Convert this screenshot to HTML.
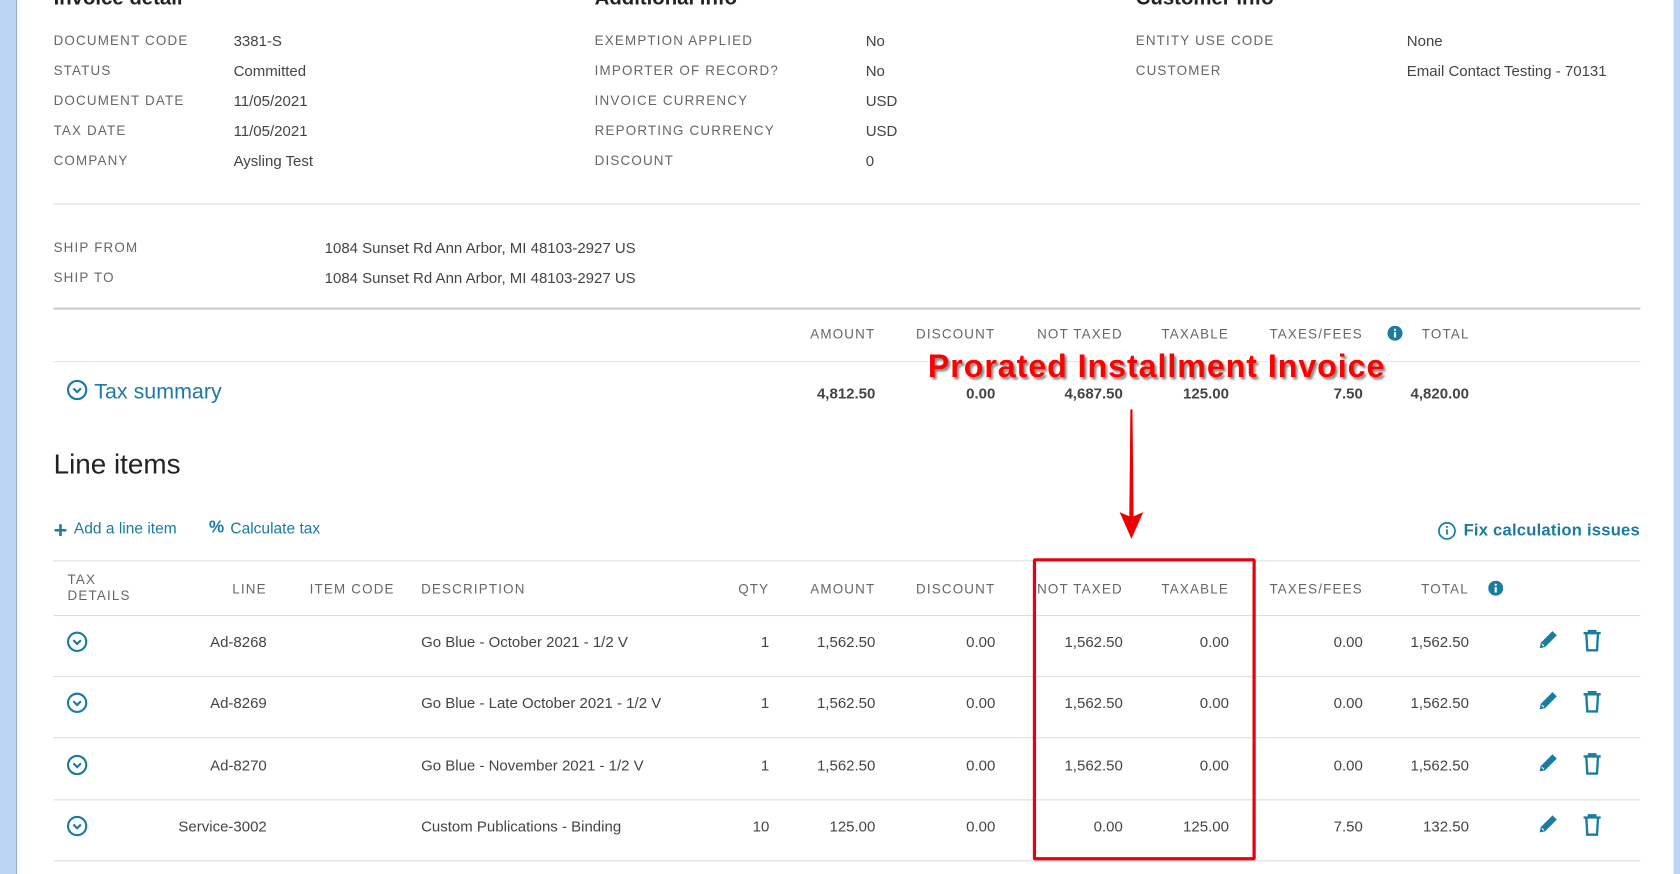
<!DOCTYPE html>
<html><head><meta charset="utf-8"><style>
html,body{margin:0;padding:0;background:#fff;width:1680px;height:874px;overflow:hidden}
#w{position:absolute;left:0;top:0;width:1568px;height:816px;transform:scale(1.07143);transform-origin:0 0;font-family:"Liberation Sans",sans-serif}
#w div{position:absolute;white-space:nowrap}
.lb{font-size:12.5px;letter-spacing:1.1px;color:#666;line-height:16px}
.v{font-size:14px;color:#444;line-height:18px}
.h{font-size:19px;font-weight:bold;color:#222}
.hr{height:1px;background:#ddd;left:50px;width:1481px}
.r{text-align:right;width:140px}
.b{font-weight:bold;color:#444;font-size:14px}
.blue{color:#1a7ba3}
</style></head><body><div id="w">
<div style="left:0;top:0;width:15px;height:816px;background:#bcd5f2"></div>
<div style="left:15px;top:0;width:1px;height:816px;background:#9ab"></div>
<div style="left:1562px;top:0;width:6px;height:816px;background:#bcd5f2"></div>

<div class="h" style="left:50px;top:-12px">Invoice detail</div>
<div class="h" style="left:555px;top:-12px">Additional info</div>
<div class="h" style="left:1060px;top:-12px">Customer info</div>

<div class="lb" style="left:50px;top:30px">DOCUMENT CODE</div><div class="v" style="left:218px;top:29px">3381-S</div>
<div class="lb" style="left:50px;top:58px">STATUS</div><div class="v" style="left:218px;top:57px">Committed</div>
<div class="lb" style="left:50px;top:86px">DOCUMENT DATE</div><div class="v" style="left:218px;top:85px">11/05/2021</div>
<div class="lb" style="left:50px;top:114px">TAX DATE</div><div class="v" style="left:218px;top:113px">11/05/2021</div>
<div class="lb" style="left:50px;top:142px">COMPANY</div><div class="v" style="left:218px;top:141px">Aysling Test</div>

<div class="lb" style="left:555px;top:30px">EXEMPTION APPLIED</div><div class="v" style="left:808px;top:29px">No</div>
<div class="lb" style="left:555px;top:58px">IMPORTER OF RECORD?</div><div class="v" style="left:808px;top:57px">No</div>
<div class="lb" style="left:555px;top:86px">INVOICE CURRENCY</div><div class="v" style="left:808px;top:85px">USD</div>
<div class="lb" style="left:555px;top:114px">REPORTING CURRENCY</div><div class="v" style="left:808px;top:113px">USD</div>
<div class="lb" style="left:555px;top:142px">DISCOUNT</div><div class="v" style="left:808px;top:141px">0</div>

<div class="lb" style="left:1060px;top:30px">ENTITY USE CODE</div><div class="v" style="left:1313px;top:29px">None</div>
<div class="lb" style="left:1060px;top:58px">CUSTOMER</div><div class="v" style="left:1313px;top:57px">Email Contact Testing - 70131</div>

<div class="hr" style="top:190px"></div>
<div class="lb" style="left:50px;top:223px">SHIP FROM</div><div class="v" style="left:303px;top:222px">1084 Sunset Rd Ann Arbor, MI 48103-2927 US</div>
<div class="lb" style="left:50px;top:251px">SHIP TO</div><div class="v" style="left:303px;top:250px">1084 Sunset Rd Ann Arbor, MI 48103-2927 US</div>
<div class="hr" style="top:287px;height:2px;background:#ccc"></div>

<div class="lb r" style="left:677px;top:304px">AMOUNT</div>
<div class="lb r" style="left:789px;top:304px">DISCOUNT</div>
<div class="lb r" style="left:908px;top:304px">NOT TAXED</div>
<div class="lb r" style="left:1007px;top:304px">TAXABLE</div>
<div class="lb r" style="left:1132px;top:304px">TAXES/FEES</div>
<svg style="position:absolute;left:1295px;top:304px" width="14" height="14" viewBox="0 0 14 14"><circle cx="7" cy="7" r="7" fill="#1a7ba3"/><rect x="6" y="6" width="2" height="5" fill="#fff"/><circle cx="7" cy="3.8" r="1.1" fill="#fff"/></svg>
<div class="lb" style="left:1327px;top:304px">TOTAL</div>
<div class="hr" style="top:337px;background:#e6e6e6"></div>

<svg style="position:absolute;left:62px;top:354px" width="20" height="20" viewBox="0 0 20 20"><circle cx="10" cy="10" r="8.5" fill="none" stroke="#1a7ba3" stroke-width="2"/><path d="M6.5 8.5 L10 12 L13.5 8.5" fill="none" stroke="#1a7ba3" stroke-width="2"/></svg>
<div class="blue" style="left:88px;top:355px;font-size:20px">Tax summary</div>
<div class="b r" style="left:677px;top:359px">4,812.50</div>
<div class="b r" style="left:789px;top:359px">0.00</div>
<div class="b r" style="left:908px;top:359px">4,687.50</div>
<div class="b r" style="left:1007px;top:359px">125.00</div>
<div class="b r" style="left:1132px;top:359px">7.50</div>
<div class="b r" style="left:1231px;top:359px">4,820.00</div>

<div style="left:866px;top:326px;font-size:30px;font-weight:bold;color:#f00;text-shadow:2px 2px 2px #888,-1px -1px 1px #fff;letter-spacing:0.9px">Prorated Installment Invoice</div>
<svg style="position:absolute;left:1043px;top:382px" width="26" height="122" viewBox="0 0 26 122"><path d="M12 0 L14 0 L15 100 L24 96 L13 121 L2 96 L11 100 Z" fill="#e00"/></svg>

<div style="left:50px;top:418px;font-size:26px;color:#222">Line items</div>

<div class="blue" style="left:50px;top:482px;font-size:22px;font-weight:bold">+</div>
<div class="blue" style="left:69px;top:486px;font-size:14.5px">Add a line item</div>
<div class="blue" style="left:195px;top:484px;font-size:16px;font-weight:bold">%</div>
<div class="blue" style="left:215px;top:486px;font-size:14.5px">Calculate tax</div>
<svg style="position:absolute;left:1342px;top:487px" width="17" height="17" viewBox="0 0 17 17"><circle cx="8.5" cy="8.5" r="7.5" fill="none" stroke="#1a7ba3" stroke-width="1.6"/><rect x="7.7" y="7" width="1.6" height="5" fill="#1a7ba3"/><circle cx="8.5" cy="4.8" r="1" fill="#1a7ba3"/></svg>
<div class="blue" style="left:1366px;top:487px;font-size:15.5px;font-weight:bold;letter-spacing:0.2px">Fix calculation issues</div>

<div class="hr" style="top:523px"></div>
<div class="lb" style="left:63px;top:534px;line-height:15px">TAX<br>DETAILS</div>
<div class="lb r" style="left:109px;top:542px">LINE</div>
<div class="lb" style="left:289px;top:542px">ITEM CODE</div>
<div class="lb" style="left:393px;top:542px">DESCRIPTION</div>
<div class="lb r" style="left:578px;top:542px">QTY</div>
<div class="lb r" style="left:677px;top:542px">AMOUNT</div>
<div class="lb r" style="left:789px;top:542px">DISCOUNT</div>
<div class="lb r" style="left:908px;top:542px">NOT TAXED</div>
<div class="lb r" style="left:1007px;top:542px">TAXABLE</div>
<div class="lb r" style="left:1132px;top:542px">TAXES/FEES</div>
<div class="lb r" style="left:1231px;top:542px">TOTAL</div>
<svg style="position:absolute;left:1389px;top:542px" width="14" height="14" viewBox="0 0 14 14"><circle cx="7" cy="7" r="7" fill="#1a7ba3"/><rect x="6" y="6" width="2" height="5" fill="#fff"/><circle cx="7" cy="3.8" r="1.1" fill="#fff"/></svg>
<div class="hr" style="top:574px"></div>

<div id="rows"></div>
<script>
var rows=[["Ad-8268","Go Blue - October 2021 - 1/2 V","1","1,562.50","0.00","1,562.50","0.00","0.00","1,562.50"],
["Ad-8269","Go Blue - Late October 2021 - 1/2 V","1","1,562.50","0.00","1,562.50","0.00","0.00","1,562.50"],
["Ad-8270","Go Blue - November 2021 - 1/2 V","1","1,562.50","0.00","1,562.50","0.00","0.00","1,562.50"],
["Service-3002","Custom Publications - Binding","10","125.00","0.00","0.00","125.00","7.50","132.50"]];
var h="";
rows.forEach(function(r,i){var y=589+i*57.3;var ty=y+1;
h+='<svg style="position:absolute;left:62px;top:'+(y)+'px" width="20" height="20" viewBox="0 0 20 20"><circle cx="10" cy="10" r="8.5" fill="none" stroke="#1a7ba3" stroke-width="2"/><path d="M6.5 8.5 L10 12 L13.5 8.5" fill="none" stroke="#1a7ba3" stroke-width="2"/></svg>';
h+='<div class="v r" style="left:109px;top:'+ty+'px">'+r[0]+'</div>';
h+='<div class="v" style="left:393px;top:'+ty+'px">'+r[1]+'</div>';
var L=[578,677,789,908,1007,1132,1231];
for(var k=0;k<7;k++)h+='<div class="v r" style="left:'+L[k]+'px;top:'+ty+'px">'+r[k+2]+'</div>';
h+='<svg style="position:absolute;left:1434px;top:'+(y-3)+'px" width="22" height="22" viewBox="0 0 22 22"><path d="M3 19 L4 14 L15 3 L19 7 L8 18 Z" fill="#1a7ba3"/><path d="M5 15 L7 17" stroke="#fff" stroke-width="1"/></svg>';
h+='<svg style="position:absolute;left:1476px;top:'+(y-2)+'px" width="20" height="22" viewBox="0 0 20 22"><path d="M2 4 H18 M7 4 V2 H13 V4 M4.5 4 L5.5 20 H14.5 L15.5 4" fill="none" stroke="#1a7ba3" stroke-width="2.2"/></svg>';
h+='<div class="hr" style="top:'+(631+i*57.3)+'px"></div>';});
document.getElementById("rows").outerHTML=h;
</script>
<div style="left:964px;top:521px;width:202px;height:276px;border:3px solid #e8000f;border-radius:2px"></div>
</div></body></html>
